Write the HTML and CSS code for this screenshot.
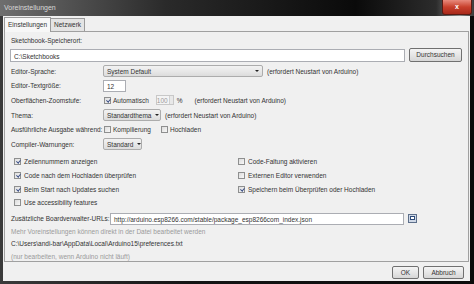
FILE: index.html
```html
<!DOCTYPE html>
<html lang="de">
<head>
    <meta charset="UTF-8">
    <title>Voreinstellungen</title>
    <link rel="stylesheet" href="styles.css">
</head>
<body>
    <div class="window">
        <div class="titlebar">
            <span class="title">Voreinstellungen</span>
            <span class="close">x</span>
        </div>
        <div class="client">
            <div class="tabs">
                <span class="tab active">Einstellungen</span>
                <span class="tab">Netzwerk</span>
            </div>
            <div class="panel">
                <div class="lbl top">Sketchbook-Speicherort:</div>
                <div class="row path-row">
                    <div class="input grow">C:\Sketchbooks</div>
                    <span class="btn">Durchsuchen</span>
                </div>

                <div class="form">
                    <div class="lbl">Editor-Sprache:</div>
                    <div class="ctl">
                        <div class="select lang">System Default<span class="arrow"></span></div>
                        <span class="hint">(erfordert Neustart von Arduino)</span>
                    </div>

                    <div class="lbl">Editor-Textgröße:</div>
                    <div class="ctl"><div class="input size">12</div></div>

                    <div class="lbl">Oberflächen-Zoomstufe:</div>
                    <div class="ctl">
                        <span class="check on"></span><span class="cl">Automatisch</span>
                        <div class="spin">100<span class="spin-btns"></span></div>
                        <span class="pct">%</span>
                        <span class="hint">(erfordert Neustart von Arduino)</span>
                    </div>

                    <div class="lbl">Thema:</div>
                    <div class="ctl">
                        <div class="select theme">Standardthema<span class="arrow"></span></div>
                        <span class="hint">(erfordert Neustart von Arduino)</span>
                    </div>

                    <div class="lbl">Ausführliche Ausgabe während:</div>
                    <div class="ctl">
                        <span class="check"></span><span class="cl">Kompilierung</span>
                        <span class="check"></span><span class="cl">Hochladen</span>
                    </div>

                    <div class="lbl">Compiler-Warnungen:</div>
                    <div class="ctl"><div class="select warn">Standard<span class="arrow"></span></div></div>
                </div>

                <div class="checks">
                    <div class="ck"><span class="check on"></span>Zeilennummern anzeigen</div>
                    <div class="ck"><span class="check"></span>Code-Faltung aktivieren</div>
                    <div class="ck"><span class="check on"></span>Code nach dem Hochladen überprüfen</div>
                    <div class="ck"><span class="check"></span>Externen Editor verwenden</div>
                    <div class="ck"><span class="check on"></span>Beim Start nach Updates suchen</div>
                    <div class="ck"><span class="check on"></span>Speichern beim Überprüfen oder Hochladen</div>
                    <div class="ck"><span class="check"></span>Use accessibility features</div>
                </div>

                <div class="row url-row">
                    <span class="lbl">Zusätzliche Boardverwalter-URLs:</span>
                    <div class="input grow">http://arduino.esp8266.com/stable/package_esp8266com_index.json</div>
                    <span class="icon-btn">
                        <svg width="9" height="9" viewBox="0 0 9 9">
                            <rect x="0.5" y="0.5" width="8" height="8" fill="#cfd8e6" stroke="#5d6f8a"/>
                            <rect x="2" y="2" width="5" height="4" fill="#2c4a78"/>
                            <rect x="3" y="3" width="3" height="2" fill="#fff"/>
                        </svg>
                    </span>
                </div>
                <div class="note">Mehr Voreinstellungen können direkt in der Datei bearbeitet werden</div>
                <div class="file">C:\Users\andi-bar\AppData\Local\Arduino15\preferences.txt</div>
                <div class="note">(nur bearbeiten, wenn Arduino nicht läuft)</div>
            </div>
            <div class="footer">
                <span class="btn ok">OK</span>
                <span class="btn cancel">Abbruch</span>
            </div>
        </div>
    </div>
</body>
</html>
```

FILE: styles.css
```css
body {
    margin: 0;
    background: #111;
    font-family: "Liberation Sans", Arial, sans-serif;
    font-size: 6.5px;
    color: #333;
}

.window {
    width: 474px;
    height: 284px;
    display: flex;
    flex-direction: column;
    background: linear-gradient(90deg, #3a3a3a 0%, #141414 40%, #0b0b0b 100%);
}

.titlebar {
    height: 16px;
    display: flex;
    align-items: flex-start;
    justify-content: space-between;
    background: linear-gradient(90deg, #6e6e6e 0%, #2a2a2a 35%, #0a0a0a 75%, #2c2c2c 92%, #8a8a8a 97%, #3a3a3a 100%);
}

.title {
    padding: 4px 0 0 4px;
    color: #d8d8d8;
    font-size: 7px;
}

.close {
    width: 28px;
    height: 14px;
    margin-right: 2px;
    border-radius: 0 0 3px 3px;
    background: linear-gradient(180deg, #e88a7c 0%, #c8402c 50%, #a8281a 100%);
    border: 1px solid #5a1a12;
    border-top: none;
    color: #fff;
    font-weight: bold;
    font-size: 7px;
    text-align: center;
    line-height: 13px;
}

.client {
    flex: 1;
    margin: 0 4px 3px 3px;
    background: #f0f0f0;
    display: flex;
    flex-direction: column;
    padding-top: 1px;
}

.tabs {
    display: flex;
    height: 14px;
    padding-left: 1px;
    align-items: flex-end;
}

.tab {
    height: 12px;
    line-height: 12px;
    padding: 0 3px;
    border: 1px solid #9a9a9a;
    border-bottom: none;
    background: #e4e4e4;
    margin-right: -1px;
}

.tab.active {
    height: 14px;
    line-height: 14px;
    background: #f7f7f7;
    position: relative;
    z-index: 1;
    margin-bottom: -1px;
}

.panel {
    height: 231px;
    margin: 0 1px 0 1px;
    border: 1px solid #a0a0a0;
    background: #f0f0f0;
    padding: 4px 6px 0 5px;
    box-sizing: border-box;
}

.lbl {
    white-space: nowrap;
}

.lbl.top {
    height: 10px;
    line-height: 10px;
    padding-left: 1px;
}

.row {
    display: flex;
    align-items: center;
}

.path-row {
    margin-top: 2px;
    gap: 4px;
}

.input {
    height: 13px;
    line-height: 13px;
    background: #fff;
    border: 1px solid #abadb3;
    padding: 0 3px;
    box-sizing: border-box;
    white-space: nowrap;
    overflow: hidden;
}

.grow {
    flex: 1;
}

.btn {
    display: inline-block;
    height: 14px;
    line-height: 12px;
    box-sizing: border-box;
    border: 1px solid #707070;
    border-radius: 2px;
    background: linear-gradient(180deg, #f4f4f4 0%, #e6e6e6 50%, #d6d6d6 100%);
    text-align: center;
    padding: 0 4px;
}

.path-row .btn {
    width: 53px;
}

.form {
    display: grid;
    grid-template-columns: 92px 1fr;
    grid-auto-rows: 14.6px;
    align-items: center;
    margin-top: 2px;
    padding-left: 1px;
}

.ctl {
    display: flex;
    align-items: center;
    gap: 3px;
}

.select {
    height: 12px;
    line-height: 11px;
    box-sizing: border-box;
    border: 1px solid #acacac;
    border-radius: 2px;
    background: linear-gradient(180deg, #f2f2f2 0%, #e8e8e8 50%, #dcdcdc 100%);
    padding: 0 3px;
    display: flex;
    justify-content: space-between;
    align-items: center;
}

.arrow {
    width: 0;
    height: 0;
    border-left: 2px solid transparent;
    border-right: 2px solid transparent;
    border-top: 2px solid #222;
    margin-left: 4px;
}

.select.lang {
    width: 160px;
}

.select.theme {
    width: 58px;
}

.select.warn {
    width: 39px;
}

.input.size {
    width: 23px;
    height: 12px;
    line-height: 11px;
}

.hint {
    margin-left: 1px;
}

.check {
    display: inline-block;
    width: 7px;
    height: 7px;
    box-sizing: border-box;
    border: 1px solid #8e8f8f;
    background: linear-gradient(135deg, #dcdcdc 0%, #f8f8f8 100%);
    position: relative;
    flex: none;
}

.check.on::after {
    content: "";
    position: absolute;
    left: 1.5px;
    top: 0;
    width: 1.5px;
    height: 3px;
    border: solid #3b4f86;
    border-width: 0 1.2px 1.2px 0;
    transform: rotate(40deg);
}

.ctl .check {
    margin-left: 1px;
}

.cl {
    margin-right: 6px;
    margin-left: -1px;
}

.spin {
    width: 18px;
    height: 10px;
    line-height: 9px;
    border: 1px solid #c8c8c8;
    background: #f4f4f4;
    color: #9a9a9a;
    box-sizing: border-box;
    display: flex;
    justify-content: flex-end;
    margin-left: -2px;
}

.spin-btns {
    width: 4px;
    margin-left: 1px;
    border-left: 1px solid #d0d0d0;
    background: #e8e8e8;
}

.pct {
    margin-right: 8px;
}

.checks {
    display: grid;
    grid-template-columns: 224px 1fr;
    grid-auto-rows: 13.8px;
    align-items: center;
    margin-top: 3px;
    padding-left: 4px;
}

.ck {
    display: flex;
    align-items: center;
    gap: 3px;
}

.url-row {
    margin-top: 3px;
    padding-left: 1px;
    gap: 3px;
}

.url-row .lbl {
    width: 96px;
}

.url-row .input {
    height: 12px;
    line-height: 11px;
}

.icon-btn {
    width: 11px;
    height: 11px;
    display: flex;
    align-items: center;
    justify-content: center;
    margin-right: 44px;
}

.note {
    color: #9a9a9a;
    height: 13px;
    line-height: 13px;
    padding-left: 1px;
}

.note + .file {
    margin-top: 0;
}

.file {
    height: 12.5px;
    line-height: 12.5px;
    padding-left: 1px;
}

.footer {
    display: flex;
    justify-content: flex-end;
    gap: 4px;
    padding: 4px 6px 0 0;
}

.footer .btn {
    height: 13px;
    line-height: 11px;
}

.btn.ok {
    width: 27px;
}

.btn.cancel {
    width: 41px;
}
```
